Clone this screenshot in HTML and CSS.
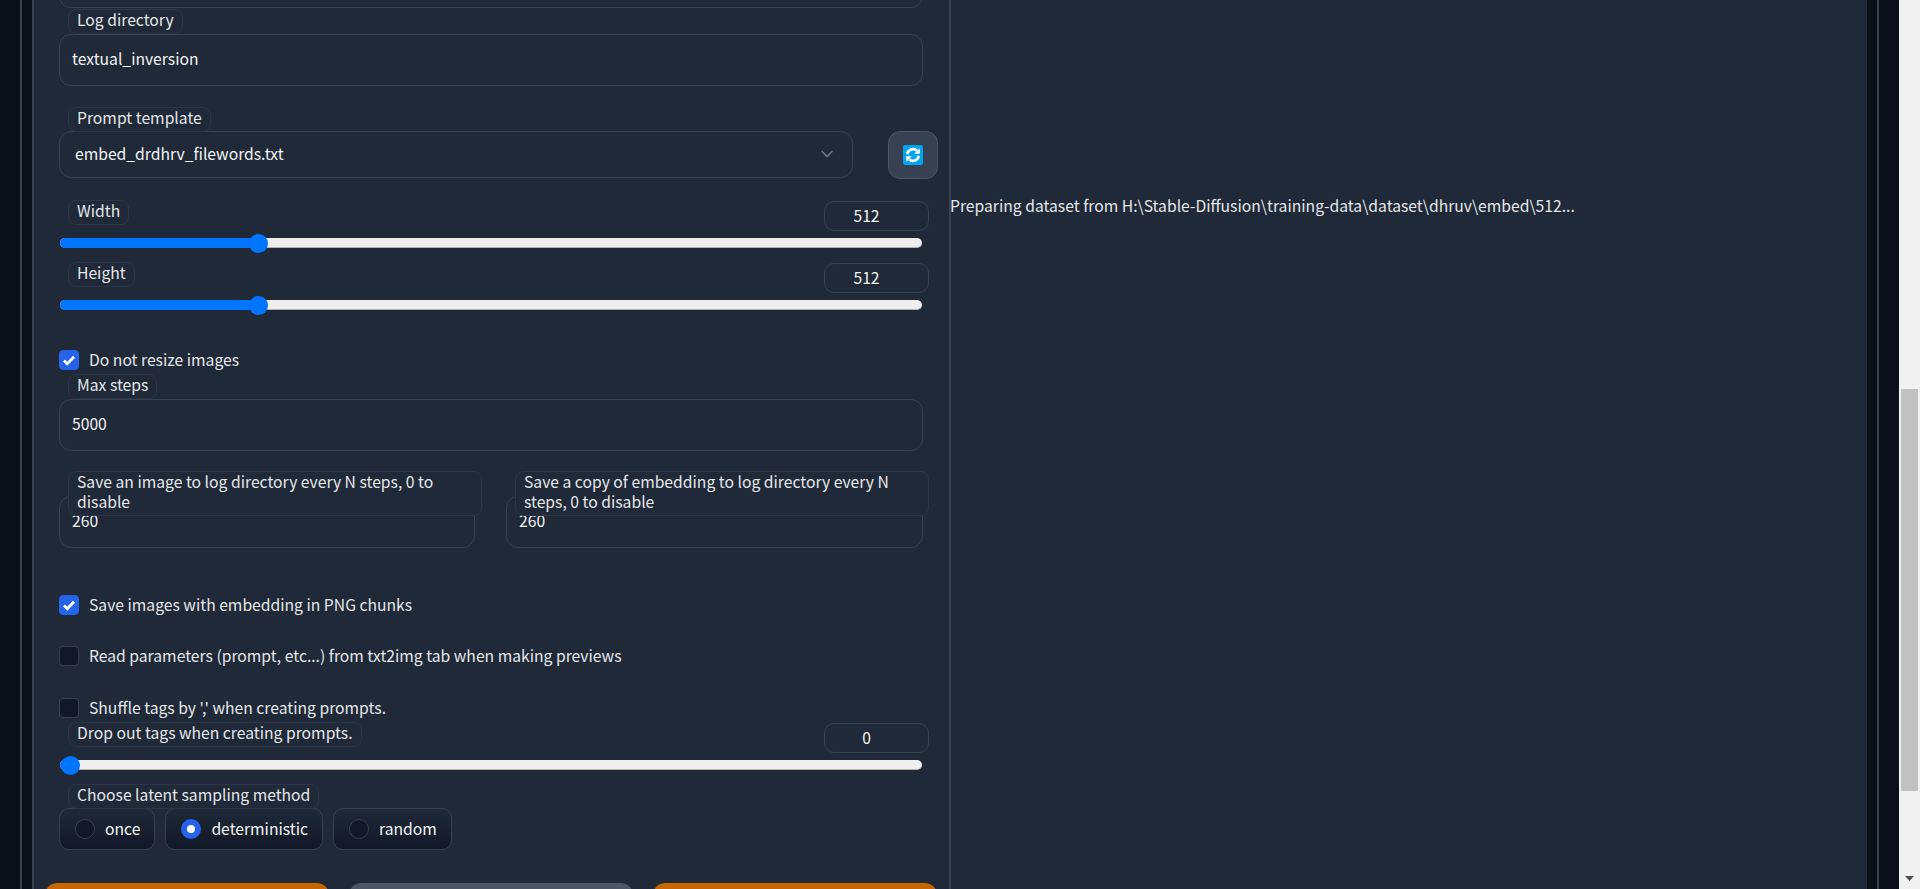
FILE: index.html
```html
<!DOCTYPE html>
<html lang="en">
<head>
<meta charset="utf-8">
<title>Train</title>
<link rel="stylesheet" href="styles.css">
</head>
<body>
<div class="page">
  <div class="frame">
    <div class="panel">
      <section class="col-left">
        <div class="form">
          <div class="box stub"></div>

          <div class="field log-field">
            <div class="tag">Log directory</div>
            <div class="box">textual_inversion</div>
          </div>

          <div class="field prompt-field">
            <div class="tag">Prompt template</div>
            <div class="select-row">
              <div class="select">
                <span>embed_drdhrv_filewords.txt</span>
                <svg class="chevron" viewBox="0 0 14 8" width="14" height="8" aria-hidden="true"><path d="M1.5 1l5.5 5.5L12.500 1" fill="none" stroke="#6b7280" stroke-width="1.700"/></svg>
              </div>
              <div class="refresh">
                <svg viewBox="0 0 20 20" width="20" height="20" aria-hidden="true">
                  <rect width="20" height="20" rx="2" fill="#00a4ef"/>
                  <path d="M4.200 9.200A5.900 5.900 0 0 1 14 5.700" fill="none" stroke="#fff" stroke-width="2.600"/>
                  <path d="M11.200 8.800h5.600V3.200z" fill="#fff"/>
                  <path d="M15.800 10.800A5.900 5.900 0 0 1 6 14.300" fill="none" stroke="#fff" stroke-width="2.600"/>
                  <path d="M8.800 11.200H3.200v5.600z" fill="#fff"/>
                </svg>
              </div>
            </div>
          </div>

          <div class="slider first-slider">
            <div class="slider-head"><div class="tag">Width</div><div class="num">512</div></div>
            <div class="track"><div class="fill" style="width:198px"><span class="thumb"></span></div></div>
          </div>
          <div class="slider next-slider">
            <div class="slider-head"><div class="tag">Height</div><div class="num">512</div></div>
            <div class="track"><div class="fill" style="width:198px"><span class="thumb"></span></div></div>
          </div>

          <label class="check resize-check"><span class="tick on"><svg viewBox="0 0 20 20" width="20" height="20" aria-hidden="true"><path d="M5 10.500l3.300 3.300L15 6.800" fill="none" stroke="#fff" stroke-width="2.800"/></svg></span>Do not resize images</label>

          <div class="field steps-field">
            <div class="tag">Max steps</div>
            <div class="box">5000</div>
          </div>

          <div class="two-col">
            <div class="field">
              <div class="tag tag-wide">Save an image to log directory every N steps, 0 to disable</div>
              <div class="box box-under">260</div>
            </div>
            <div class="field">
              <div class="tag tag-wide">Save a copy of embedding to log directory every N steps, 0 to disable</div>
              <div class="box box-under">260</div>
            </div>
          </div>

          <label class="check png-check"><span class="tick on"><svg viewBox="0 0 20 20" width="20" height="20" aria-hidden="true"><path d="M5 10.500l3.300 3.300L15 6.800" fill="none" stroke="#fff" stroke-width="2.800"/></svg></span>Save images with embedding in PNG chunks</label>
          <label class="check read-check"><span class="tick"></span>Read parameters (prompt, etc...) from txt2img tab when making previews</label>
          <label class="check shuffle-check"><span class="tick"></span>Shuffle tags by ',' when creating prompts.</label>

          <div class="slider drop-slider">
            <div class="slider-head"><div class="tag">Drop out tags when creating prompts.</div><div class="num">0</div></div>
            <div class="track"><div class="fill" style="width:10px"><span class="thumb"></span></div></div>
          </div>

          <div class="field latent-field">
            <div class="tag">Choose latent sampling method</div>
            <div class="radios">
              <label class="radio"><span class="dot"></span>once</label>
              <label class="radio"><span class="dot on"></span>deterministic</label>
              <label class="radio"><span class="dot"></span>random</label>
            </div>
          </div>
        </div>

        <div class="actions">
          <div class="btn btn-primary"></div>
          <div class="btn btn-secondary"></div>
          <div class="btn btn-primary"></div>
        </div>
      </section>

      <section class="col-right">
        <div class="status">Preparing dataset from H:\Stable-Diffusion\training-data\dataset\dhruv\embed\512...</div>
      </section>
    </div>
  </div>
  <div class="scrollbar">
    <div class="thumb-bar"></div>
    <svg class="arrow" viewBox="0 0 9 5" width="9" height="5" aria-hidden="true"><path d="M0 0h9L4.500 5z" fill="#505050"/></svg>
  </div>
</div>
</body>
</html>
```

FILE: styles.css
```css
* { box-sizing: border-box; }

html, body {
  margin: 0;
  height: 100%;
  overflow: hidden;
  background: #0b0f19;
}

body {
  font-family: "Noto Sans CJK SC", "Source Sans Pro", "Noto Sans", sans-serif;
  font-size: 15.7px;
  line-height: 20px;
  color: #e5e7eb;
}

.page {
  display: flex;
  height: 889px;
}

.frame {
  flex: 1;
  margin: 0 20px;
  padding: 0 10px;
  min-width: 0;
  border-left: 2px solid #374151;
  border-right: 2px solid #374151;
}

.panel {
  display: flex;
  height: 100%;
  overflow: hidden;
  border-left: 2px solid #374151;
  background: #1f2937;
}

.col-left {
  flex: 0 0 917px;
  padding: 0 11px;
  border-right: 2px solid #374151;
}

.col-right {
  flex: 1;
  padding-top: 196px;
}

.status {
  margin-left: -1px;
  color: #e5e7eb;
}

.form {
  display: flex;
  flex-direction: column;
  align-items: flex-start;
  margin: -44px 0 0 14px;
  width: 879px;
}

.field {
  display: flex;
  flex-direction: column;
  align-items: flex-start;
}

.tag {
  position: relative;
  z-index: 1;
  margin-left: 9px;
  padding: 0 8px 3px;
  border: 1px solid #2b3545;
  border-radius: 8px;
  background: #1f2937;
  color: #e5e7eb;
}

.tag-wide {
  width: 414px;
}

.box {
  width: 864px;
  height: 52px;
  padding: 0 12px 2px;
  display: flex;
  align-items: center;
  border: 1px solid #374151;
  border-radius: 12px;
  color: #f3f4f6;
}

.stub { flex: none; }
.log-field { margin-top: 1px; }
.prompt-field { margin-top: 21px; }

.select-row {
  display: flex;
  gap: 35px;
  margin-top: -1px;
}

.select {
  width: 794px;
  height: 47px;
  padding: 0 18px 2px 15px;
  display: flex;
  align-items: center;
  justify-content: space-between;
  border: 1px solid #374151;
  border-radius: 12px;
  color: #f3f4f6;
}

.refresh {
  width: 50px;
  height: 48px;
  display: flex;
  align-items: center;
  justify-content: center;
  border: 1px solid #4b5563;
  border-radius: 12px;
  background: #374151;
}

.slider { width: 879px; }
.first-slider { margin-top: 21px; }
.next-slider { margin-top: 14px; }
.drop-slider { margin-top: 4px; }

.slider-head {
  display: flex;
  align-items: flex-start;
  justify-content: space-between;
  padding-right: 9px;
  height: 38px;
}

.num {
  width: 105px;
  height: 30px;
  margin-top: 1px;
  padding-right: 20px;
  border: 1px solid #374151;
  border-radius: 10px;
  text-align: center;
  line-height: 27px;
  color: #f3f4f6;
}

.track {
  width: 862px;
  height: 10px;
  margin-left: 1px;
  border-radius: 5px;
  border-bottom: 1px solid #b2b2b2;
  background: #efefef;
}

.fill {
  position: relative;
  height: 10px;
  border-radius: 5px;
  background: #0075ff;
}

.thumb {
  position: absolute;
  top: -4.500px;
  right: -9.500px;
  width: 19px;
  height: 19px;
  border-radius: 50%;
  background: #0075ff;
}

.check {
  display: flex;
  align-items: center;
  gap: 10px;
  height: 20px;
  padding-bottom: 0;
}

.resize-check { margin-top: 40px; }
.png-check { margin-top: 47px; }
.read-check { margin-top: 31px; }
.shuffle-check { margin-top: 32px; }

.tick {
  flex: none;
  width: 20px;
  height: 20px;
  border: 1px solid #374151;
  border-radius: 4px;
  background: #111827;
}

.tick.on {
  border-color: #2563eb;
  background: #2563eb;
}

.tick svg {
  display: block;
  margin: -1px;
}

.steps-field { margin-top: 4px; }

.two-col {
  display: grid;
  grid-template-columns: 416px 417px;
  gap: 31px;
  margin-top: 20px;
}

.box-under {
  width: 100%;
  margin-top: -20px;
}

.latent-field { margin-top: 14px; }

.radios {
  display: flex;
  gap: 10px;
  margin-top: -1px;
}

.radio {
  display: flex;
  align-items: center;
  gap: 10px;
  height: 42px;
  padding: 0 14px 0 15px;
  border: 1px solid #374151;
  border-radius: 10px;
  background: linear-gradient(to bottom, #1f2937, #111827);
  color: #f3f4f6;
}

.dot {
  flex: none;
  width: 20px;
  height: 20px;
  border: 1px solid #374151;
  border-radius: 50%;
  background: #111827;
}

.dot.on {
  border: 6px solid #2563eb;
  background: #fff;
}

.actions {
  display: flex;
  gap: 20px;
  margin-top: 33px;
}

.btn {
  width: 284px;
  height: 44px;
  border-radius: 12px;
}

.btn-primary { background: #c96500; }
.btn-secondary { background: #4b5563; }

.scrollbar {
  flex: 0 0 21px;
  display: flex;
  flex-direction: column;
  align-items: center;
  padding-top: 389px;
  background: #f1f1f1;
}

.thumb-bar {
  width: 17px;
  height: 402px;
  background: #c1c1c1;
}

.arrow {
  margin-top: 85px;
}
```
